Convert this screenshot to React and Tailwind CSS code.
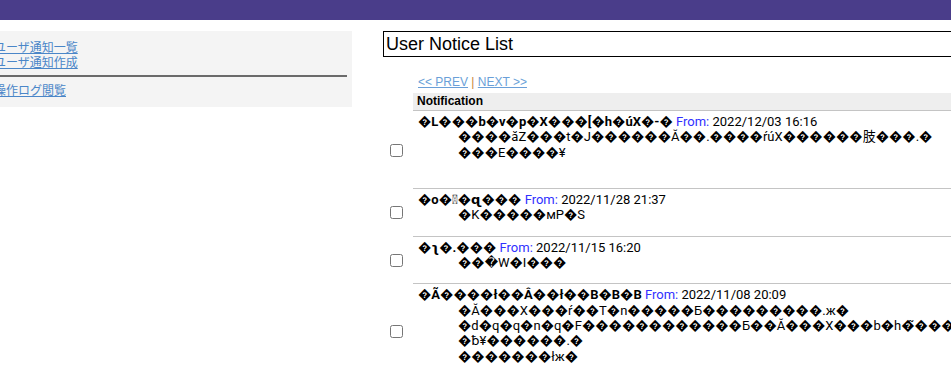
import React from 'react';

const rows = [
  {
    title: '�L���b�v�p�X���[�h�úX�-�',
    date: '2022/12/03 16:16',
    body: ['����ăZ���t�J������Ă��.����ŕúX������肢���.�', '���E����¥', ''],
  },
  {
    title: '�o�\uF0A2�ɋ���',
    date: '2022/11/28 21:37',
    body: ['�K�����мP�S'],
  },
  {
    title: '�ʅ�.���',
    date: '2022/11/15 16:20',
    body: ['���\u05BCW�I���'],
  },
  {
    title: '�Ã����ł��Â��ł��B�B�B',
    date: '2022/11/08 20:09',
    body: [
      '�Ă���X���ŕ��T�n�����Б���������.ж�',
      '�d�q�q�n�q�F������������Б��Ă���X���b�h�̃����Ă��ł����',
      '�ƀ¥������.�',
      '�������łж�',
    ],
  },
];

const jp = { fontFamily: '"Noto Sans CJK JP", "Noto Sans", sans-serif' };
const arial = { fontFamily: '"Liberation Sans", Arial, sans-serif' };
const rowFont = { fontFamily: 'Roboto, "Noto Sans CJK JP", "DejaVu Sans", sans-serif' };

const NoticeRow = ({ row }) => (
  <div className="flex items-center">
    <div className="w-[30px] shrink-0 pl-[7px] flex items-center">
      <input type="checkbox" className="w-[13px] h-[13px] m-0" />
    </div>
    <div className="flex-1 border-b border-[#c4c4c4] pt-[3px] pb-[13px] pl-[5px] text-[13px] leading-[15.3px] text-black whitespace-nowrap" style={rowFont}>
      <div>
        <span className="font-bold">{row.title}</span>{' '}
        <span className="text-[#3030ff]">From:</span> {row.date}
      </div>
      {row.body.map((line, i) => (
        <div key={i} className="pl-[40px] h-[15.3px]">{line}</div>
      ))}
    </div>
  </div>
);

export default function App() {
  return (
    <div className="w-[951px] h-[369px] overflow-hidden bg-white">
      <div className="h-[20px] bg-[#4a3d8a]" />
      <div className="flex mt-[11px]">
        {/* side menu */}
        <div className="w-[352px] shrink-0 self-start bg-[#f4f4f4] pt-[8px] pb-[10px] pr-[5px] text-[12px] leading-[15px]" style={jp}>
          <div className="-ml-[6px]">
            <a href="#" className="block w-fit text-[#4a86c8] underline">ユーザ通知一覧</a>
            <a href="#" className="block w-fit text-[#4a86c8] underline">ユーザ通知作成</a>
          </div>
          <div className="mt-[6px] border-t-2 border-[#6a6a6a]" />
          <div className="-ml-[6px] mt-[5px]">
            <a href="#" className="block w-fit text-[#4a86c8] underline">操作ログ閲覧</a>
          </div>
        </div>

        {/* main */}
        <div className="ml-[31px] w-[720px] shrink-0">
          <div className="h-[26px] border border-black pl-[2px] text-[18px] leading-[24px] text-black" style={arial}>
            User Notice List
          </div>
          <div className="mt-[18px] pl-[35px] text-[12px] leading-[14px]" style={arial}>
            <a href="#" className="text-[#6a9fd8] underline">&lt;&lt; PREV</a>
            <span className="text-[#c8843c]"> | </span>
            <a href="#" className="text-[#6a9fd8] underline">NEXT &gt;&gt;</a>
          </div>
          <div className="mt-[4px] flex">
            <div className="w-[30px] shrink-0" />
            <div className="flex-1 h-[18px] bg-[#eeeeee] border-b border-[#c4c4c4] pl-[4px] text-[12px] leading-[17px] font-bold text-black" style={arial}>
              Notification
            </div>
          </div>
          {rows.map((row, i) => (
            <NoticeRow key={i} row={row} />
          ))}
        </div>
      </div>
    </div>
  );
}
